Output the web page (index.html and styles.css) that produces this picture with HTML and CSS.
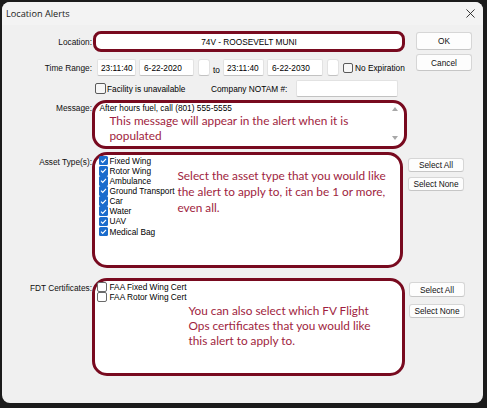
FILE: index.html
```html
<!DOCTYPE html>
<html>
<head>
<meta charset="utf-8">
<title>Location Alerts</title>
<link rel="stylesheet" href="styles.css">
</head>
<body>
<div class="window">
  <div class="titlebar">
    <span class="title">Location Alerts</span>
    <svg class="close" viewBox="0 0 10 10"><path d="M0.5 0.5 L9.5 9.5 M9.5 0.5 L0.5 9.5" stroke="#222" stroke-width="1" fill="none"/></svg>
  </div>

  <div class="top">
    <div class="top-fields">
      <div class="row row-loc">
        <span class="lbl">Location:</span>
        <div class="loc">74V - ROOSEVELT MUNI</div>
      </div>
      <div class="row row-time">
        <span class="lbl">Time Range:</span>
        <div class="field f1">23:11:40</div>
        <div class="field f2">6-22-2020</div>
        <div class="field fbox fb1"></div>
        <span class="to">to</span>
        <div class="field f3">23:11:40</div>
        <div class="field f4">6-22-2030</div>
        <div class="field fbox fb2"></div>
        <span class="cb cb-noexp"></span>
        <span class="cb-text">No Expiration</span>
      </div>
      <div class="row row-fac">
        <span class="cb cb-fac"></span>
        <span class="fac-text">Facility is unavailable</span>
        <span class="company">Company NOTAM #:</span>
        <div class="field notam"></div>
      </div>
    </div>
    <div class="top-buttons">
      <div class="btn btn-ok">OK</div>
      <div class="btn btn-cancel">Cancel</div>
    </div>
  </div>

  <div class="row-block row-msg">
    <span class="lbl lbl-top lbl-msg">Message:</span>
    <div class="annot-box msgbox">
      <div class="msg-content">
        <div class="msg-line">After hours fuel, call (801) 555-5555</div>
        <div class="annot-text msg-annot">This message will appear in the alert when it is<br>populated</div>
      </div>
      <div class="scroll">
        <span class="tri-up"></span>
        <span class="tri-down"></span>
      </div>
    </div>
  </div>

  <div class="row-block row-asset">
    <span class="lbl lbl-top lbl-asset">Asset Type(s):</span>
    <div class="annot-box assetbox">
      <div class="items asset-items">
        <div class="item"><span class="chk"><svg viewBox="0 0 9 9"><path d="M2 4.7 L3.7 6.4 L7 2.8" stroke="#fff" stroke-width="1.1" fill="none"/></svg></span>Fixed Wing</div>
        <div class="item"><span class="chk"><svg viewBox="0 0 9 9"><path d="M2 4.7 L3.7 6.4 L7 2.8" stroke="#fff" stroke-width="1.1" fill="none"/></svg></span>Rotor Wing</div>
        <div class="item"><span class="chk"><svg viewBox="0 0 9 9"><path d="M2 4.7 L3.7 6.4 L7 2.8" stroke="#fff" stroke-width="1.1" fill="none"/></svg></span>Ambulance</div>
        <div class="item"><span class="chk"><svg viewBox="0 0 9 9"><path d="M2 4.7 L3.7 6.4 L7 2.8" stroke="#fff" stroke-width="1.1" fill="none"/></svg></span>Ground Transport</div>
        <div class="item"><span class="chk"><svg viewBox="0 0 9 9"><path d="M2 4.7 L3.7 6.4 L7 2.8" stroke="#fff" stroke-width="1.1" fill="none"/></svg></span>Car</div>
        <div class="item"><span class="chk"><svg viewBox="0 0 9 9"><path d="M2 4.7 L3.7 6.4 L7 2.8" stroke="#fff" stroke-width="1.1" fill="none"/></svg></span>Water</div>
        <div class="item"><span class="chk"><svg viewBox="0 0 9 9"><path d="M2 4.7 L3.7 6.4 L7 2.8" stroke="#fff" stroke-width="1.1" fill="none"/></svg></span>UAV</div>
        <div class="item"><span class="chk"><svg viewBox="0 0 9 9"><path d="M2 4.7 L3.7 6.4 L7 2.8" stroke="#fff" stroke-width="1.1" fill="none"/></svg></span>Medical Bag</div>
      </div>
      <div class="annot-text asset-annot">Select the asset type that you would like<br>the alert to apply to, it can be 1 or more,<br>even all.</div>
    </div>
    <div class="side-buttons asset-buttons">
      <div class="btn btn-sel">Select All</div>
      <div class="btn btn-sel btn-none">Select None</div>
    </div>
  </div>

  <div class="row-block row-fdt">
    <span class="lbl lbl-top lbl-fdt">FDT Certificates:</span>
    <div class="annot-box fdtbox">
      <div class="items fdt-items">
        <div class="item item-fdt"><span class="unchk"></span>FAA Fixed Wing Cert</div>
        <div class="item item-fdt"><span class="unchk"></span>FAA Rotor Wing Cert</div>
      </div>
      <div class="annot-text fdt-annot">You can also select which FV Flight<br>Ops certificates that you would like<br>this alert to apply to.</div>
    </div>
    <div class="side-buttons fdt-buttons">
      <div class="btn btn-sel btn-sel-fdt">Select All</div>
      <div class="btn btn-sel btn-none-fdt">Select None</div>
    </div>
  </div>
</div>
</body>
</html>
```

FILE: styles.css
```css
* { box-sizing: border-box; }
html, body { margin: 0; padding: 0; }
body {
  background: #1b1b1b;
  width: 487px;
  height: 408px;
  overflow: hidden;
  font-family: "Liberation Sans", Arial, sans-serif;
  font-size: 8.3px;
  color: #000;
}
.window {
  margin: 2px 0 0 2px;
  width: 481px;
  height: 401px;
  background: #f0f0f0;
  border-radius: 8px;
  overflow: hidden;
}
.titlebar {
  height: 23px;
  background: #f3f3f3;
  display: flex;
  align-items: center;
  justify-content: space-between;
  padding: 0 8px 0 4px;
}
.title {
  font-family: "Open Sans", sans-serif;
  font-size: 9.2px;
  color: #1a1a1a;
}
.close { width: 9px; height: 9px; }

.top { display: flex; margin-top: 6px; }
.top-fields { width: 403px; display: flex; flex-direction: column; }
.row { display: flex; align-items: center; }
.lbl { width: 90px; flex: none; text-align: right; color: #111; }

.loc {
  margin-left: 1px;
  width: 312px;
  height: 21px;
  border: 3.5px solid #780a1f;
  border-radius: 8px;
  background: #fff;
  display: flex;
  align-items: center;
  justify-content: center;
}

.row-time { margin-top: 7px; height: 17px; }
.field {
  background: #fff;
  border: 1px solid #e2e2e2;
  border-bottom-color: #c2c2c2;
  border-radius: 2px;
  height: 17px;
  display: flex;
  align-items: center;
  padding-left: 3px;
  flex: none;
}
.f1 { margin-left: 5px; width: 39px; }
.f2 { margin-left: 3px; width: 55px; padding-left: 4px; }
.fbox { width: 12px; border-radius: 3px; }
.fb1 { margin-left: 4px; }
.to { margin-left: 3px; width: 7px; align-self: flex-end; padding-bottom: 1px; }
.f3 { margin-left: 3px; width: 41px; }
.f4 { margin-left: 3px; width: 56px; padding-left: 4px; }
.fb2 { margin-left: 4px; }
.cb {
  width: 10px;
  height: 10px;
  border: 1px solid #5a5a5a;
  border-radius: 2px;
  background: #f7f7f7;
  flex: none;
}
.cb-noexp { margin-left: 4px; }
.cb-text { margin-left: 2px; white-space: nowrap; }

.row-fac { margin-top: 4px; height: 17px; }
.cb-fac { margin-left: 93px; width: 11px; height: 11px; }
.fac-text { margin-left: 1px; width: 104px; white-space: nowrap; flex: none; }
.company { width: 85px; white-space: nowrap; flex: none; }
.notam { width: 102px; }

.top-buttons {
  margin-left: 11px;
  padding-top: 1px;
  display: flex;
  flex-direction: column;
}
.btn {
  width: 56px;
  background: #fdfdfd;
  border: 1px solid #d6d6d6;
  border-bottom-color: #c6c6c6;
  border-radius: 3px;
  display: flex;
  align-items: center;
  justify-content: center;
  color: #111;
  flex: none;
}
.btn-ok { height: 18px; }
.btn-cancel { height: 17px; margin-top: 4px; }

.row-block { display: flex; align-items: flex-start; }
.lbl-top { line-height: 10px; }

.annot-box {
  border: 3.5px solid #780a1f;
  background: #fff;
  flex: none;
}
.annot-text {
  font-family: Lato, "Open Sans", sans-serif;
  font-size: 11.8px;
  color: #a01e40;
  white-space: nowrap;
}

.row-msg { margin-top: 3px; }
.lbl-msg { padding-top: 3px; }
.msgbox {
  width: 315px;
  height: 49px;
  border-radius: 14px;
  display: flex;
}
.msg-content { flex: 1; padding-left: 4.5px; }
.msg-line { height: 10px; line-height: 10px; }
.msg-annot { padding-left: 10px; line-height: 15px; }
.scroll {
  width: 8px;
  margin-right: 5.5px;
  padding: 3.5px 0 6.5px;
  display: flex;
  flex-direction: column;
  justify-content: space-between;
  align-items: center;
}
.tri-up, .tri-down {
  width: 0;
  height: 0;
  border-left: 3px solid transparent;
  border-right: 3px solid transparent;
}
.tri-up { border-bottom: 4px solid #a8a8a8; }
.tri-down { border-top: 4px solid #a8a8a8; }

.row-asset { margin-top: 3px; }
.lbl-asset { padding-top: 5px; }
.assetbox {
  width: 311px;
  height: 116px;
  border-radius: 15px;
  display: flex;
  align-items: flex-start;
  padding: 0.5px 0 0 3.5px;
}
.asset-items { width: 79px; flex: none; }
.item {
  display: flex;
  align-items: center;
  height: 10.15px;
  white-space: nowrap;
}
.chk {
  width: 9px;
  height: 9.6px;
  background: #1b6ccc;
  border-radius: 1.5px;
  margin-right: 2px;
  flex: none;
  display: flex;
  align-items: center;
}
.chk svg { width: 9px; height: 9px; }
.asset-annot { margin-top: 12px; line-height: 16px; }

.side-buttons { display: flex; flex-direction: column; }
.asset-buttons { margin-left: 5px; padding-top: 6px; }
.btn-sel { height: 14px; }
.btn-none { margin-top: 5px; }

.row-fdt { margin-top: 10px; }
.lbl-fdt { padding-top: 5px; }
.fdtbox {
  width: 313px;
  height: 98px;
  border-radius: 15px;
  padding: 0.5px 0 0 1.5px;
}
.item-fdt { height: 10px; }
.unchk {
  width: 10px;
  height: 10px;
  border: 1px solid #6a6a6a;
  border-radius: 2px;
  background: #fff;
  margin-right: 3px;
  flex: none;
}
.fdt-annot { margin-left: 92px; margin-top: 1.5px; line-height: 15px; }
.fdt-buttons { margin-left: 4px; padding-top: 4px; }
.btn-sel-fdt { height: 15px; }
.btn-none-fdt { margin-top: 7px; }
```
